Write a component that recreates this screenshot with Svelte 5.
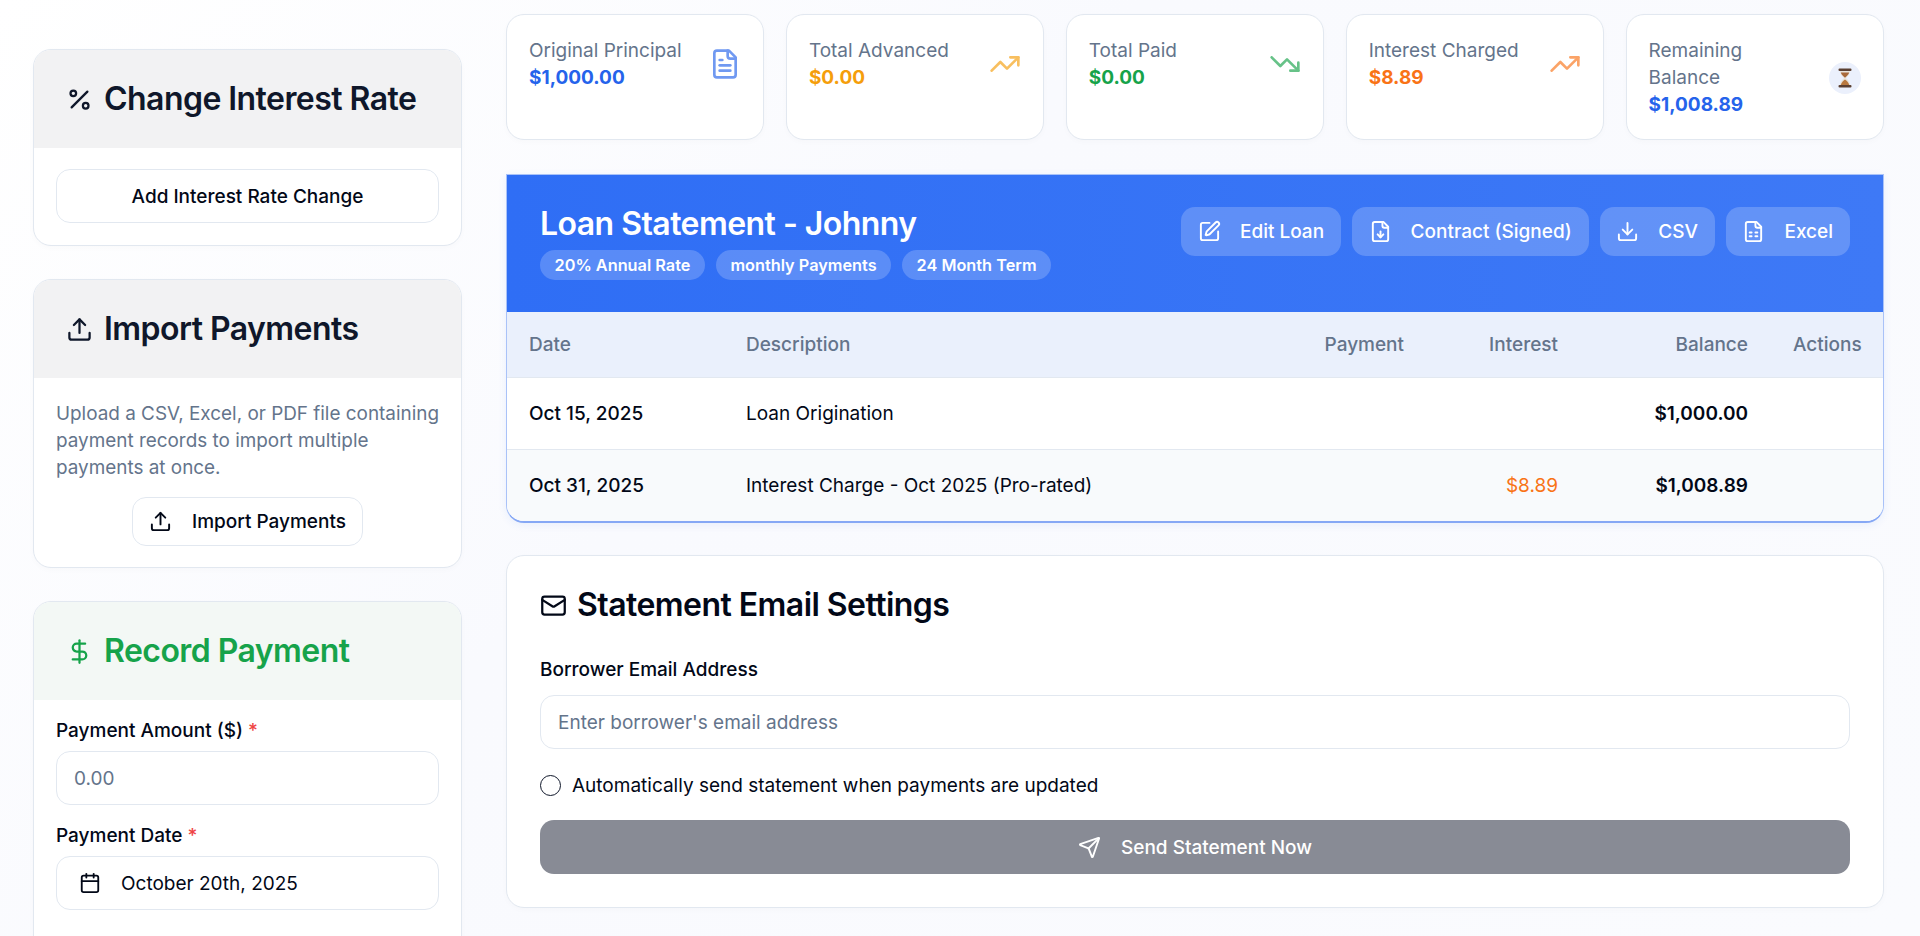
<script>
  const stats = [
    { label: "Original Principal", value: "$1,000.00", tone: "blue", icon: "file" },
    { label: "Total Advanced", value: "$0.00", tone: "amber", icon: "up" },
    { label: "Total Paid", value: "$0.00", tone: "green", icon: "down" },
    { label: "Interest Charged", value: "$8.89", tone: "orange", icon: "up" },
    { label: "Remaining Balance", value: "$1,008.89", tone: "blue", icon: "hourglass" },
  ];
  const chips = ["20% Annual Rate", "monthly Payments", "24 Month Term"];
  const actions = [
    { label: "Edit Loan", icon: "edit" },
    { label: "Contract (Signed)", icon: "filedown" },
    { label: "CSV", icon: "download" },
    { label: "Excel", icon: "sheet" },
  ];
  const rows = [
    { date: "Oct 15, 2025", desc: "Loan Origination", interest: "", balance: "$1,000.00" },
    { date: "Oct 31, 2025", desc: "Interest Charge - Oct 2025 (Pro-rated)", interest: "$8.89", balance: "$1,008.89" },
  ];
</script>

{#snippet upload(size)}
  <svg class="ic" width={size} height={size} viewBox="0 0 24 24">
    <path d="M21 15v4a2 2 0 0 1-2 2H5a2 2 0 0 1-2-2v-4" />
    <polyline points="17 8 12 3 7 8" />
    <line x1="12" y1="3" x2="12" y2="15" />
  </svg>
{/snippet}

{#snippet actionIcon(name)}
  <svg class="ic" width="23" height="23" viewBox="0 0 24 24">
    {#if name === "edit"}
      <path d="M12 3H5a2 2 0 0 0-2 2v14a2 2 0 0 0 2 2h14a2 2 0 0 0 2-2v-7" />
      <path d="M18.375 2.625a1 1 0 0 1 3 3l-9.013 9.014a2 2 0 0 1-.853.505l-2.873.84a.5.5 0 0 1-.62-.62l.84-2.873a2 2 0 0 1 .506-.852z" />
    {:else if name === "filedown"}
      <path d="M15 2H6a2 2 0 0 0-2 2v16a2 2 0 0 0 2 2h12a2 2 0 0 0 2-2V7Z" />
      <path d="M14 2v4a2 2 0 0 0 2 2h4" />
      <path d="M12 18v-6" />
      <path d="m9 15 3 3 3-3" />
    {:else if name === "download"}
      <path d="M21 15v4a2 2 0 0 1-2 2H5a2 2 0 0 1-2-2v-4" />
      <polyline points="7 10 12 15 17 10" />
      <line x1="12" y1="15" x2="12" y2="3" />
    {:else}
      <path d="M15 2H6a2 2 0 0 0-2 2v16a2 2 0 0 0 2 2h12a2 2 0 0 0 2-2V7Z" />
      <path d="M14 2v4a2 2 0 0 0 2 2h4" />
      <path d="M8 13h2" />
      <path d="M14 13h2" />
      <path d="M8 17h2" />
      <path d="M14 17h2" />
    {/if}
  </svg>
{/snippet}

<div class="page">
  <aside class="sidebar">
    <section class="card">
      <header class="card-head">
        <svg class="ic" width="27" height="27" viewBox="0 0 24 24">
          <line x1="19" y1="5" x2="5" y2="19" />
          <circle cx="6.5" cy="6.5" r="2.5" />
          <circle cx="17.5" cy="17.5" r="2.5" />
        </svg>
        <h2>Change Interest Rate</h2>
      </header>
      <div class="card-body first">
        <button class="btn wide">Add Interest Rate Change</button>
      </div>
    </section>

    <section class="card">
      <header class="card-head">
        {@render upload(27)}
        <h2>Import Payments</h2>
      </header>
      <div class="card-body import">
        <p>Upload a CSV, Excel, or PDF file containing payment records to import multiple payments at once.</p>
        <button class="btn small">{@render upload(23)}Import Payments</button>
      </div>
    </section>

    <section class="card last">
      <header class="card-head green">
        <svg class="ic" width="27" height="27" viewBox="0 0 24 24">
          <line x1="12" y1="2" x2="12" y2="22" />
          <path d="M17 5H9.5a3.5 3.5 0 0 0 0 7h5a3.5 3.5 0 0 1 0 7H6" />
        </svg>
        <h2>Record Payment</h2>
      </header>
      <div class="card-body form">
        <label for="amount">Payment Amount ($) <span class="req">*</span></label>
        <input id="amount" placeholder="0.00" />
        <label class="second" for="date">Payment Date <span class="req">*</span></label>
        <button id="date" class="date">
          <svg class="ic" width="22" height="22" viewBox="0 0 24 24">
            <rect x="3" y="4" width="18" height="18" rx="2" />
            <line x1="16" y1="2" x2="16" y2="6" />
            <line x1="8" y1="2" x2="8" y2="6" />
            <line x1="3" y1="10" x2="21" y2="10" />
          </svg>
          October 20th, 2025
        </button>
      </div>
    </section>
  </aside>

  <main class="main">
    <div class="stats">
      {#each stats as s}
        <div class="stat">
          <div class="stat-text">
            <div class="stat-label">{s.label}</div>
            <div class="stat-value {s.tone}">{s.value}</div>
          </div>
          {#if s.icon === "hourglass"}
            <span class="glass">
              <svg width="16" height="20" viewBox="0 0 16 20">
                <rect x="1.5" y="0.5" width="13" height="2.4" rx="1" fill="#5b4032" />
                <rect x="1.5" y="17.1" width="13" height="2.4" rx="1" fill="#5b4032" />
                <path d="M3 3h10c0 3-2 5-4 7 2 2 4 4 4 7H3c0-3 2-5 4-7-2-2-4-4-4-7z" fill="#e8e4dc" />
                <path d="M3.8 4.6h8.4c-.5 2-2.4 3.6-4.2 5.2-1.8-1.6-3.7-3.2-4.2-5.2z" fill="#a8693a" />
                <path d="M8 11.5c1.8 1.4 3.6 3 4.2 5.5H3.8c.6-2.5 2.4-4.1 4.2-5.5z" fill="#b9793f" />
              </svg>
            </span>
          {:else}
            <svg class="ic stat-ic {s.tone}" width="32" height="32" viewBox="0 0 24 24">
              {#if s.icon === "file"}
                <path d="M15 2H6a2 2 0 0 0-2 2v16a2 2 0 0 0 2 2h12a2 2 0 0 0 2-2V7Z" />
                <path d="M14 2v4a2 2 0 0 0 2 2h4" />
                <path d="M10 9H8" />
                <path d="M16 13H8" />
                <path d="M16 17H8" />
              {:else if s.icon === "up"}
                <polyline points="22 7 13.5 15.5 8.5 10.5 2 17" />
                <polyline points="16 7 22 7 22 13" />
              {:else}
                <polyline points="22 17 13.5 8.5 8.5 13.5 2 7" />
                <polyline points="16 17 22 17 22 11" />
              {/if}
            </svg>
          {/if}
        </div>
      {/each}
    </div>

    <section class="statement">
      <header class="statement-head">
        <div>
          <h1>Loan Statement - Johnny</h1>
          <div class="chips">
            {#each chips as c}<span class="chip">{c}</span>{/each}
          </div>
        </div>
        <div class="actions">
          {#each actions as a}
            <button class="action">{@render actionIcon(a.icon)}{a.label}</button>
          {/each}
        </div>
      </header>
      <table>
        <colgroup>
          <col class="c-date" /><col /><col class="c-pay" /><col class="c-int" /><col class="c-bal" /><col class="c-act" />
        </colgroup>
        <thead>
          <tr>
            <th>Date</th>
            <th>Description</th>
            <th class="r">Payment</th>
            <th class="r">Interest</th>
            <th class="r">Balance</th>
            <th class="r last-col">Actions</th>
          </tr>
        </thead>
        <tbody>
          {#each rows as row}
            <tr>
              <td class="date-cell">{row.date}</td>
              <td>{row.desc}</td>
              <td></td>
              <td class="r interest">{row.interest}</td>
              <td class="r balance">{row.balance}</td>
              <td></td>
            </tr>
          {/each}
        </tbody>
      </table>
    </section>

    <section class="email">
      <div class="email-title">
        <svg class="ic" width="27" height="27" viewBox="0 0 24 24">
          <rect x="2" y="4" width="20" height="16" rx="2" />
          <path d="m22 7-8.97 5.7a1.94 1.94 0 0 1-2.06 0L2 7" />
        </svg>
        <h2>Statement Email Settings</h2>
      </div>
      <label for="email">Borrower Email Address</label>
      <input id="email" placeholder="Enter borrower's email address" />
      <div class="check"><span class="radio"></span>Automatically send statement when payments are updated</div>
      <button class="send">
        <svg class="ic" width="23" height="23" viewBox="0 0 24 24">
          <path d="M14.536 21.686a.5.5 0 0 0 .937-.024l6.5-19a.496.496 0 0 0-.635-.635l-19 6.5a.5.5 0 0 0-.024.937l7.93 3.18a2 2 0 0 1 1.112 1.11z" />
          <path d="m21.854 2.147-10.94 10.939" />
        </svg>
        Send Statement Now
      </button>
    </section>
  </main>
</div>

<style>
  :global(body) {
    margin: 0;
    font-family: Inter, "Liberation Sans", sans-serif;
    color: #020817;
  }
  .page {
    display: flex;
    align-items: flex-start;
    gap: 44px;
    height: 936px;
    box-sizing: border-box;
    padding: 14px 36px 0 33px;
    overflow: hidden;
    background: linear-gradient(135deg, #ffffff, #f9fafe 40%, #fafbfe);
    font-size: 19px;
  }
  .ic {
    fill: none;
    stroke: currentColor;
    stroke-width: 2;
    stroke-linecap: round;
    stroke-linejoin: round;
    flex: none;
  }
  h1,
  h2,
  p {
    margin: 0;
  }
  button,
  input {
    font: inherit;
    color: inherit;
  }

  .sidebar {
    width: 429px;
    flex: none;
    display: flex;
    flex-direction: column;
    gap: 33px;
    padding-top: 35px;
  }
  .card {
    background: #fff;
    border: 1.5px solid #e2e8f0;
    border-radius: 18px;
    overflow: hidden;
    box-shadow: 0 2px 6px rgba(15, 23, 42, 0.02);
  }
  .card.last {
    height: 400px;
  }
  .card-head {
    display: flex;
    align-items: center;
    gap: 11px;
    height: 98px;
    box-sizing: border-box;
    padding: 0 32px;
    background: #f2f2f3;
    color: #0f172a;
  }
  .card-head.green {
    background: #f3f8f5;
    color: #16a34a;
  }
  h2 {
    font-size: 32px;
    line-height: 40px;
    font-weight: 600;
    letter-spacing: -0.55px;
  }
  .card-body {
    padding: 21px 22px 22px;
  }
  .card-body.first {
    padding-bottom: 22px;
  }
  .btn {
    display: flex;
    align-items: center;
    justify-content: center;
    background: #fff;
    border: 1.5px solid #e2e8f0;
    border-radius: 14px;
    font-weight: 500;
  }
  .btn.wide {
    width: 100%;
    height: 54px;
  }
  .import {
    padding-top: 22px;
    padding-bottom: 21px;
  }
  .import p {
    margin-right: -6px;
    color: #64748b;
    line-height: 27px;
    font-size: 18.9px;
  }
  .btn.small {
    gap: 20px;
    height: 49px;
    width: 231px;
    margin: 16px auto 0;
  }
  .form {
    padding-top: 17px;
    display: flex;
    flex-direction: column;
  }
  label {
    display: block;
    font-weight: 500;
    line-height: 27px;
    margin-bottom: 7px;
  }
  label.second {
    margin-top: 17px;
  }
  .req {
    color: #ef4444;
  }
  input {
    display: block;
    width: 100%;
    height: 54px;
    box-sizing: border-box;
    padding: 0 17px;
    background: #fff;
    border: 1.5px solid #e2e8f0;
    border-radius: 14px;
    outline: none;
  }
  input::placeholder {
    color: #64748b;
    opacity: 1;
  }
  .date {
    display: flex;
    align-items: center;
    gap: 20px;
    height: 54px;
    padding: 0 22px;
    background: #fff;
    border: 1.5px solid #e2e8f0;
    border-radius: 14px;
  }

  .main {
    flex: 1;
    min-width: 0;
  }
  .stats {
    display: grid;
    grid-template-columns: repeat(5, 1fr);
    gap: 21.5px;
  }
  .stat {
    display: flex;
    justify-content: space-between;
    align-items: flex-start;
    height: 126px;
    box-sizing: border-box;
    padding: 22px;
    background: #fff;
    border: 1.5px solid #e2e8f0;
    border-radius: 18px;
    box-shadow: 0 2px 6px rgba(15, 23, 42, 0.02);
  }
  .stat-text {
    margin-right: auto;
    max-width: 165px;
  }
  .stat-label {
    color: #64748b;
    line-height: 27px;
  }
  .stat-value {
    font-weight: 700;
    line-height: 26px;
    margin-top: 1px;
  }
  .stat-ic {
    margin-top: 11px;
    opacity: 0.65;
  }
  .blue {
    color: #2563eb;
  }
  .amber {
    color: #f59e0b;
  }
  .green {
    color: #16a34a;
  }
  .orange {
    color: #f97316;
  }
  .glass {
    display: flex;
    align-items: center;
    justify-content: center;
    width: 32px;
    height: 32px;
    margin-top: 25px;
    border-radius: 50%;
    background: #ebf0fc;
  }

  .statement {
    margin-top: 34px;
    background: #fff;
    border: 1.5px solid #a9c2f8;
    border-bottom: 2.5px solid #86a8f5;
    border-radius: 0 0 18px 18px;
    overflow: hidden;
    box-shadow: 0 2px 8px rgba(37, 99, 235, 0.08);
  }
  .statement-head {
    display: flex;
    justify-content: space-between;
    height: 137px;
    box-sizing: border-box;
    padding: 29px 33px 0;
    background: linear-gradient(90deg, #2f6ef5, #3e79f6);
    color: #fff;
  }
  h1 {
    font-size: 32px;
    line-height: 40px;
    font-weight: 600;
    letter-spacing: -0.55px;
  }
  .chips {
    display: flex;
    gap: 11px;
    margin-top: 6px;
  }
  .chip {
    height: 30px;
    padding: 0 14.5px;
    display: flex;
    align-items: center;
    border-radius: 15px;
    background: rgba(255, 255, 255, 0.2);
    font-size: 16.3px;
    font-weight: 600;
  }
  .actions {
    display: flex;
    gap: 11px;
    margin-top: 3px;
  }
  .action {
    display: flex;
    align-items: center;
    gap: 19px;
    height: 49px;
    padding: 0 17px 0 16.5px;
    border: 0;
    border-radius: 14px;
    background: rgba(255, 255, 255, 0.2);
    color: #fff;
    font-weight: 500;
  }
  table {
    width: 100%;
    border-collapse: collapse;
    table-layout: fixed;
  }
  .c-date {
    width: 217px;
  }
  .c-pay {
    width: 160px;
  }
  .c-int {
    width: 154px;
  }
  .c-bal {
    width: 190px;
  }
  .c-act {
    width: 112px;
  }
  th {
    height: 65px;
    padding: 0 23px 0 22px;
    text-align: left;
    font-weight: 500;
    color: #64748b;
    background: #eaf0fc;
    border-bottom: 1.5px solid #e2e8f0;
  }
  th.last-col {
    padding-right: 26px;
  }
  td {
    height: 71px;
    padding: 0 23px 0 22px;
  }
  tbody tr + tr td {
    background: #f8fafc;
    border-top: 1.5px solid #e2e8f0;
  }
  th.r,
  td.r {
    text-align: right;
  }
  .date-cell {
    font-weight: 500;
  }
  .interest {
    color: #f97316;
  }
  .balance {
    font-weight: 600;
  }

  .email {
    margin-top: 32px;
    height: 353px;
    box-sizing: border-box;
    padding: 29px 33px 0;
    background: #fff;
    border: 1.5px solid #e2e8f0;
    border-radius: 18px;
    box-shadow: 0 2px 6px rgba(15, 23, 42, 0.02);
  }
  .email-title {
    display: flex;
    align-items: center;
    gap: 10px;
    margin-bottom: 31px;
  }
  .email label {
    margin-bottom: 12px;
  }
  .check {
    display: flex;
    align-items: center;
    gap: 11px;
    height: 27px;
    margin-top: 23px;
  }
  .radio {
    width: 21px;
    height: 21px;
    box-sizing: border-box;
    border: 1.7px solid #0f172a;
    border-radius: 50%;
  }
  .send {
    display: flex;
    align-items: center;
    justify-content: center;
    gap: 20px;
    width: 100%;
    height: 54px;
    margin-top: 21px;
    border: 0;
    border-radius: 14px;
    background: #888b95;
    color: #fff;
    font-weight: 500;
  }
</style>
